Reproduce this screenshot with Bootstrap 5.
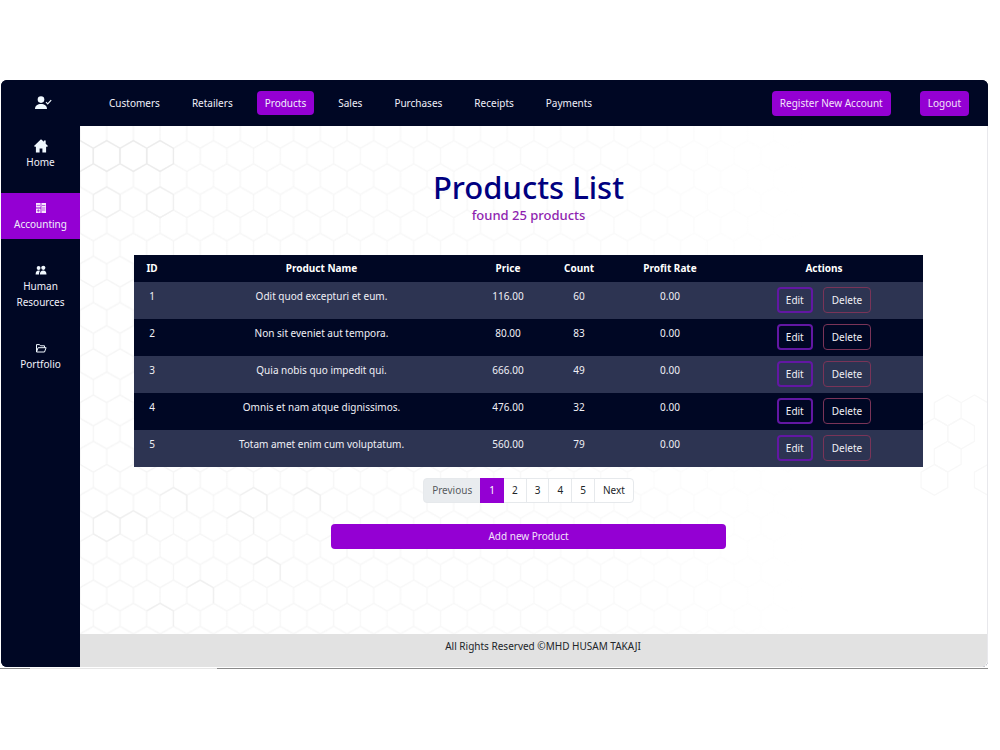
<!DOCTYPE html>
<html lang="en">
<head>
<meta charset="utf-8">
<meta name="viewport" content="width=device-width, initial-scale=1">
<title>Products List</title>
<link href="https://cdn.jsdelivr.net/npm/bootstrap@5.3.0/dist/css/bootstrap.min.css" rel="stylesheet">
<style>
:root { --navy: #000724; --slate: #2d3452; --violet: #9400d3; }
body { font-family: "Noto Sans", "Open Sans", sans-serif; font-size: 10px; line-height: 16px; background: #fff; color: #212529; }
.page { min-height: 100vh; padding: 80px 12px 81px 1px; }
.app-window { background: var(--navy); border-radius: 6px; overflow: hidden; }
.sidebar { width: 79px; background: var(--navy); }
.sidebar a { color: #f0f0fa; text-decoration: none; text-align: center; padding: 7px 8px; display: block; }
.sidebar a.active { background: var(--violet); }
.sidebar svg { display: block; margin: 0 auto; height: 16px; }
.side-user { height: 46px; padding-left: 5px; }
.side-nav { padding-top: 5px; }
.topbar { height: 46px; background: var(--navy); padding: 0 19px 0 21px; }
.topbar .nav-link { color: #f0f0fa; padding: 4px 8px; border-radius: 4px; }
.topbar .nav-link.active { background: var(--violet); }
.btn-violet { background: var(--violet); color: #f3e3fa; border: 0; border-radius: 4px; font-size: 10px; line-height: 17px; padding: 4px 8px; }
.btn-violet:hover { background: #7d00b3; color: #fff; }
.account-actions { gap: 29px; }
.content { background: #fff; border-right: 1px solid #e8e8ec; }
.content > * { position: relative; }
.content > .comb { position: absolute; inset: 0; }
.inner { padding: 40px 64px 0 54px; }
h1 { font-size: 31px; line-height: 42px; font-weight: 500; color: #000080; margin: 0; }
.found { font-size: 13px; line-height: 14px; font-weight: 500; color: #8f1fb0; }
.products { margin: 33px 0 0; table-layout: fixed; text-align: center; color: #f0f0f6; width: 100%; }
.products th { background: var(--navy); color: #fff; font-weight: 700; padding: 5px 4px 6px; }
.products td { height: 37px; padding: 6px 4px 5px; vertical-align: top; }
.products td:last-child { padding-top: 5px; }
.products tbody tr:nth-child(odd) td { background: var(--slate); }
.products tbody tr:nth-child(even) td { background: var(--navy); }
.w-id { width: 36px; } .w-price { width: 70px; } .w-count { width: 72px; } .w-rate { width: 110px; } .w-act { width: 198px; }
.action-pair { gap: 10px; }
.btn-row { font-size: 10px; line-height: 16px; padding: 4px 8px; border-radius: 4px; color: #f0f0f6; border: 1px solid #7a3458; }
.btn-edit { border: 2px solid #6217a3; padding: 3px 7px; }
.btn-row:hover { background: var(--violet); color: #fff; }
.pagination { --bs-pagination-font-size: 10px; --bs-pagination-padding-x: 8px; --bs-pagination-padding-y: 4px; --bs-pagination-color: #212529; --bs-pagination-active-bg: var(--violet); --bs-pagination-active-border-color: var(--violet); --bs-pagination-border-radius: 4px; --bs-pagination-border-color: #e6e9ec; --bs-pagination-disabled-border-color: #e6e9ec; margin: 11px 0 21px; }
.page-link { line-height: 15px; }
.foot { background: #e2e2e2; height: 33px; padding: 4px 0 0 19px; text-align: center; border-radius: 0 0 6px 0; }
.base-line { height: 1px; background: linear-gradient(90deg, #8a8a8a 3%, #e6e6e6 3%, #e6e6e6 22%, #8a8a8a 22%); margin: 1px 0 0 -1px; }
</style>
</head>
<body>
<div class="page d-flex flex-column">
  <div class="app-window d-flex flex-grow-1">
    <aside class="sidebar flex-shrink-0 d-flex flex-column">
      <div class="side-user d-flex align-items-center justify-content-center">
        <svg width="18" height="16" viewBox="0 0 18 16" fill="#f0f8ff" role="img" aria-label="User"><circle cx="7" cy="4.600" r="3.300"/><path d="M1 14c0-3.200 2.600-5 6-5s6 1.800 6 5z"/><path d="M12 7.200l1.700 1.700 3.500-3.800" fill="none" stroke="#f0f8ff" stroke-width="1.200"/></svg>
      </div>
      <nav class="side-nav d-flex flex-column gap-3">
        <a href="#"><svg width="16" height="16" viewBox="0 0 16 16" fill="#f0f8ff"><path d="M8 1.200L1 7.900l.8.900h1.100v5.800h3.700v-4h2.800v4h3.700V8.800h1.100l.8-.9-2.300-2.200V2.500h-1.800v1.200z"/></svg>Home</a>
        <a href="#" class="active"><svg width="12" height="16" viewBox="0 0 12 16"><path fill="#f6e6fc" d="M1 3h4.600v4.600H1zM1 8.400h4.600V13H1zM6.400 3H11v10H6.400z"/><path d="M1.600 5.400h3.400M3.300 9.200v3M1.800 10.700h3M7 5.500h3.300M7 8h3.300M7 10h3.300" stroke="#9400d3" stroke-width=".6" fill="none"/></svg>Accounting</a>
        <a href="#"><svg width="12" height="16" viewBox="0 0 12 16" fill="#f0f8ff"><circle cx="3.600" cy="6" r="1.900"/><circle cx="8.300" cy="5.800" r="2.100"/><path d="M.6 12.500c0-2.600 1-3.900 3-3.900.6 0 1 .1 1.300.3-.6.800-.9 1.900-.9 3.600zM4.900 12.500c0-2.600 1.300-4.100 3.300-4.100s3.300 1.500 3.300 4.100z"/></svg>Human Resources</a>
        <a href="#"><svg width="12" height="16" viewBox="0 0 12 16" fill="none" stroke="#f0f8ff" stroke-width="1" stroke-linejoin="round"><path d="M1.500 12V4.600h3l1 1.200h4v1.900M1.500 12l1.600-4.300h8L9.500 12z"/></svg>Portfolio</a>
      </nav>
    </aside>
    <div class="d-flex flex-column flex-grow-1">
      <header class="topbar d-flex align-items-center">
        <nav class="nav gap-3">
          <a class="nav-link" href="#">Customers</a>
          <a class="nav-link" href="#">Retailers</a>
          <a class="nav-link active" href="#">Products</a>
          <a class="nav-link" href="#">Sales</a>
          <a class="nav-link" href="#">Purchases</a>
          <a class="nav-link" href="#">Receipts</a>
          <a class="nav-link" href="#">Payments</a>
        </nav>
        <div class="account-actions ms-auto d-flex">
          <button type="button" class="btn btn-violet">Register New Account</button>
          <button type="button" class="btn btn-violet">Logout</button>
        </div>
      </header>
      <div class="content position-relative flex-grow-1 d-flex flex-column">
        <svg class="comb" width="100%" height="100%" aria-hidden="true">
          <defs>
            <pattern id="hex" width="26.700" height="46.260" patternUnits="userSpaceOnUse" patternTransform="translate(0 30)">
              <path d="M13.350 0V7.700M13.350 38.560V46.260M13.350 7.700L0 15.430V30.830L13.350 38.560L26.700 30.830V15.430z" fill="none" stroke="#f5f5f5" stroke-width="1.400"/>
            </pattern>
            <linearGradient id="fade"><stop offset="0" stop-color="#fff"/><stop offset=".3" stop-color="#ccc"/><stop offset=".6" stop-color="#888"/><stop offset=".8" stop-color="#000"/></linearGradient>
            <mask id="fademask"><rect width="100%" height="100%" fill="url(#fade)"/></mask>
            <path id="cell" d="M0-15.400L13.350-7.700V7.700L0 15.400L-13.350 7.700V-7.700z"/>
            <path id="arc" d="M-13.350-7.700L0-15.400L13.350-7.700V7.700"/>
          </defs>
          <rect width="100%" height="100%" fill="url(#hex)" mask="url(#fademask)"/>
          <g fill="none" stroke="#ececec" stroke-width="1.300">
            <use href="#cell" x="0" y="30"/><use href="#cell" x="26.700" y="30"/><use href="#cell" x="53.400" y="30"/><use href="#cell" x="80.100" y="30"/>
          </g>
          <g fill="none" stroke="#f0f0f0" stroke-width="1.300">
            <use href="#cell" x="26.700" y="76.260"/><use href="#cell" x="80.100" y="76.260"/>
            <use href="#arc" x="93.450" y="376.950"/><use href="#arc" x="173.550" y="376.950"/><use href="#arc" x="226.950" y="376.950"/>
            <use href="#cell" x="26.700" y="400.080"/><use href="#arc" x="53.400" y="400.080"/><use href="#arc" x="160.200" y="400.080"/>
            <use href="#arc" x="120.150" y="469.470"/><use href="#arc" x="80.100" y="492.600"/><use href="#arc" x="186.900" y="446.340"/>
          </g>
          <g fill="none" stroke="#f8f8f8" stroke-width="1.300">
            <use href="#cell" x="881.100" y="307.560"/><use href="#cell" x="867.750" y="330.690"/><use href="#arc" x="854.400" y="307.560"/><use href="#cell" x="867.750" y="284.430"/><use href="#cell" x="854.400" y="353.820"/><use href="#cell" x="907.800" y="353.820"/><use href="#arc" x="894.450" y="284.430"/>
          </g>
        </svg>
        <main class="inner text-center flex-grow-1">
          <h1>Products List</h1>
          <div class="found">found 25 products</div>
          <table class="products">
            <colgroup><col class="w-id"><col><col class="w-price"><col class="w-count"><col class="w-rate"><col class="w-act"></colgroup>
            <thead><tr><th>ID</th><th>Product Name</th><th>Price</th><th>Count</th><th>Profit Rate</th><th>Actions</th></tr></thead>
            <tbody>
              <tr><td>1</td><td>Odit quod excepturi et eum.</td><td>116.00</td><td>60</td><td>0.00</td><td><div class="d-flex justify-content-center action-pair"><button type="button" class="btn btn-row btn-edit">Edit</button><button type="button" class="btn btn-row">Delete</button></div></td></tr>
              <tr><td>2</td><td>Non sit eveniet aut tempora.</td><td>80.00</td><td>83</td><td>0.00</td><td><div class="d-flex justify-content-center action-pair"><button type="button" class="btn btn-row btn-edit">Edit</button><button type="button" class="btn btn-row">Delete</button></div></td></tr>
              <tr><td>3</td><td>Quia nobis quo impedit qui.</td><td>666.00</td><td>49</td><td>0.00</td><td><div class="d-flex justify-content-center action-pair"><button type="button" class="btn btn-row btn-edit">Edit</button><button type="button" class="btn btn-row">Delete</button></div></td></tr>
              <tr><td>4</td><td>Omnis et nam atque dignissimos.</td><td>476.00</td><td>32</td><td>0.00</td><td><div class="d-flex justify-content-center action-pair"><button type="button" class="btn btn-row btn-edit">Edit</button><button type="button" class="btn btn-row">Delete</button></div></td></tr>
              <tr><td>5</td><td>Totam amet enim cum voluptatum.</td><td>560.00</td><td>79</td><td>0.00</td><td><div class="d-flex justify-content-center action-pair"><button type="button" class="btn btn-row btn-edit">Edit</button><button type="button" class="btn btn-row">Delete</button></div></td></tr>
            </tbody>
          </table>
          <nav aria-label="Product pages">
            <ul class="pagination justify-content-center">
              <li class="page-item disabled"><a class="page-link">Previous</a></li>
              <li class="page-item active"><a class="page-link" href="#">1</a></li>
              <li class="page-item"><a class="page-link" href="#">2</a></li>
              <li class="page-item"><a class="page-link" href="#">3</a></li>
              <li class="page-item"><a class="page-link" href="#">4</a></li>
              <li class="page-item"><a class="page-link" href="#">5</a></li>
              <li class="page-item"><a class="page-link" href="#">Next</a></li>
            </ul>
          </nav>
          <button type="button" class="btn btn-violet w-50">Add new Product</button>
        </main>
        <footer class="foot">All Rights Reserved ©MHD HUSAM TAKAJI</footer>
      </div>
    </div>
  </div>
  <div class="base-line"></div>
</div>
<script src="https://cdn.jsdelivr.net/npm/bootstrap@5.3.0/dist/js/bootstrap.bundle.min.js"></script>
</body>
</html>
